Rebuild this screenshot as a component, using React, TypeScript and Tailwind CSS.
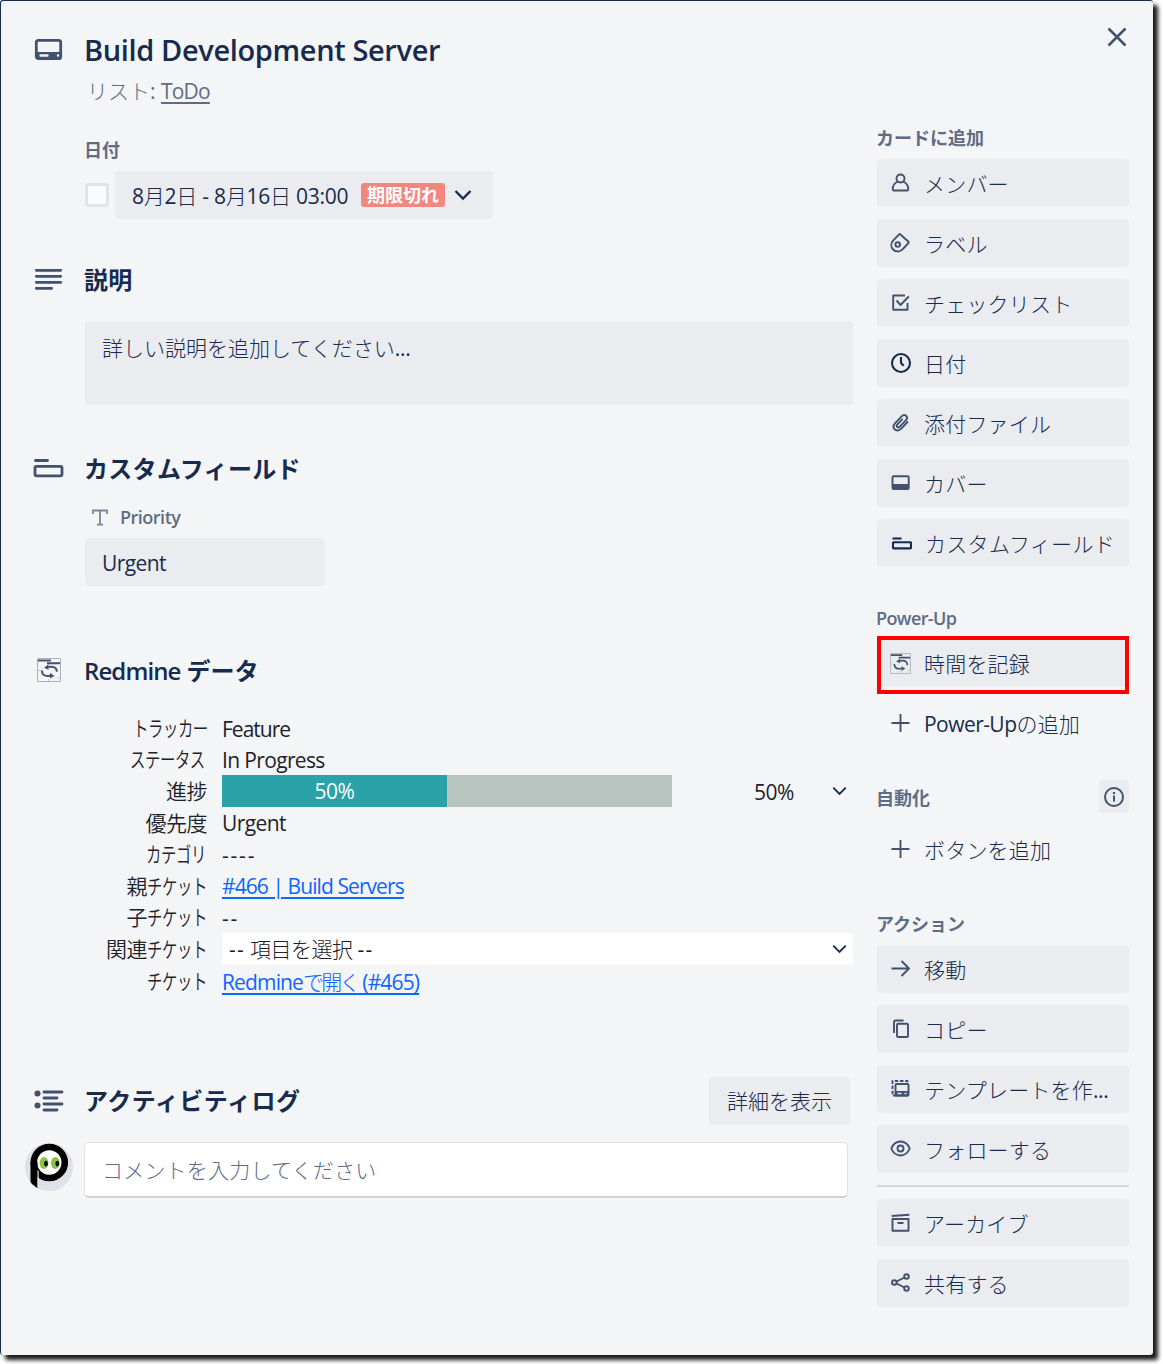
import type { ReactNode } from 'react'
import clsx from 'clsx'

/* ---------- icons ---------- */

// Large icons sit in the left gutter, small ones in the sidebar buttons.
function Big({ children }: { children: ReactNode }) {
  return (
    <svg width="36" height="36" viewBox="0 0 36 36" fill="none" stroke="#42526e" strokeWidth="2.8" strokeLinecap="round" className="shrink-0">
      {children}
    </svg>
  )
}

function Small({ dark, children }: { dark?: boolean; children: ReactNode }) {
  return (
    <svg
      width="24"
      height="24"
      viewBox="0 0 24 24"
      fill="none"
      strokeWidth="1.9"
      strokeLinejoin="round"
      className={clsx('shrink-0', dark ? 'stroke-[#172b4d]' : 'stroke-[#42526e]')}
    >
      {children}
    </svg>
  )
}

function Chevron({ size }: { size: 'sm' | 'lg' }) {
  return (
    <svg viewBox="0 0 18 12" fill="none" stroke="#172b4d" strokeWidth="2.3" className={size === 'lg' ? 'h-[12px] w-[18px]' : 'h-[10px] w-[15px]'}>
      <path d="M1.5 2 9 9.5 16.5 2" />
    </svg>
  )
}

function RedmineIcon({ size }: { size: 'sm' | 'lg' }) {
  return (
    <svg viewBox="0 0 24 24" fill="none" className={clsx('shrink-0', size === 'lg' ? 'size-[24px]' : 'size-[21px]')}>
      <path d="M.5.5h23v23H.5z" stroke="#a9b1b8" />
      <path d="M11.5 21v2M1 12.5h3M20 20h3" stroke="#c3c8ce" />
      <path d="M1 2.500h13M10 5.200h13" stroke="#42526e" strokeWidth="2" />
      <path d="M19.800 13.800c.2-3.300-2-5-5.300-5-1.200 0-2 .1-3 .3M5 12.500c-.2 3.300 1.500 5.300 5 5.500 1.200 0 2-.1 3-.3" stroke="#42526e" strokeWidth="2" />
      <path d="M11.500 6.300v5.500L7 9.800zM13 15v5.500l4.500-2.700z" fill="#42526e" />
    </svg>
  )
}

const CardIcon = (
  <Big>
    <rect x="6.300" y="8.300" width="24.400" height="18.400" rx="2" />
    <path d="M6 20h25v6H6z" fill="#42526e" stroke="none" />
    <path d="M10.500 23.500h7M28 23.500h.1" stroke="#f4f5f7" strokeWidth="2.400" />
  </Big>
)
const DescIcon = (
  <Big>
    <path d="M6.300 8.300h24.400M6.300 14.300h24.400M6.300 20.300h24.400M6.300 26.300h15.400" />
  </Big>
)
const FieldIcon = (
  <Big>
    <path d="M5.500 9.500h12" />
    <rect x="5" y="15.300" width="27" height="9.500" rx="1.500" />
  </Big>
)
const ListIcon = (
  <Big>
    <path d="M14 9h18M14 15h13M14 21h18M14 27h13" />
    <circle cx="7.500" cy="10.500" r="3" fill="#42526e" stroke="none" />
    <circle cx="7.500" cy="22.500" r="3" fill="#42526e" stroke="none" />
  </Big>
)

const icons = {
  member: (
    <Small>
      <circle cx="12.500" cy="7.500" r="4" />
      <path d="M9.800 10.500C6.500 12 4.700 15 4.700 18.300c0 .8.300 1.200 1 1.200h13.600c.7 0 1-.4 1-1.200 0-3.300-1.800-6.300-5.100-7.800" />
    </Small>
  ),
  label: (
    <Small>
      <path d="M12.200 3.200 20.500 10.800c.4.400.4.800 0 1.200l-6 6.300c-3 3-7.200 2.600-9.400.2-2.500-2.600-2.300-6.500.2-9.200l5.800-6c.4-.4.700-.4 1.100-.1z" />
      <circle cx="9.700" cy="13.600" r="2.300" />
    </Small>
  ),
  checklist: (
    <Small>
      <path d="M17 4.500H5.200v14.300h14.300V12" />
      <path d="m8.500 9.500 4 4.500 8.300-8.500" />
    </Small>
  ),
  clock: (
    <Small dark>
      <circle cx="13" cy="12" r="9" strokeWidth="2.1" />
      <path d="M13 6V12l2.700 2.800" strokeWidth="2.1" />
    </Small>
  ),
  clip: (
    <Small>
      <path d="m20 10.500-7 7.300c-2 2-4.700 2.200-6.300.6-1.700-1.700-1.400-4.300.5-6.300l6.400-6.700c1.500-1.500 3.400-1.600 4.600-.5 1.200 1.200 1 3-.4 4.500l-6 6.300c-.8.900-2 1-2.600.3-.7-.7-.6-1.700.2-2.600l5.200-5.500" />
    </Small>
  ),
  cover: (
    <Small>
      <rect x="4.500" y="5.200" width="16.200" height="12.800" rx="1" />
      <path d="M4.500 13h16v5h-16z" fill="#42526e" stroke="none" />
    </Small>
  ),
  field: (
    <Small dark>
      <path d="M4.500 7.500h9" strokeWidth="2.1" />
      <rect x="5" y="11.200" width="18" height="6.200" rx=".6" strokeWidth="2.1" />
    </Small>
  ),
  plus: (
    <Small>
      <path d="M12.500 3v18M3.500 12h18" />
    </Small>
  ),
  arrow: (
    <Small>
      <path d="M3.500 11.500h17M13.500 4l7.500 7.500-7.500 7.500" />
    </Small>
  ),
  copy: (
    <Small>
      <path d="M15.500 3.500h-8c-1 0-1.500.5-1.500 1.500v11" />
      <rect x="9" y="6.800" width="11" height="13.200" rx="1" />
    </Small>
  ),
  template: (
    <Small>
      <path d="M8.500 18.500h-4V4h15v3" strokeDasharray="3.500 1.700" />
      <rect x="7.500" y="7" width="13" height="11.700" rx="1" />
      <path d="M7.500 14h13v5h-13z" fill="#42526e" stroke="none" />
      <path d="M9.500 16.500h4M16.500 16.500h2" stroke="#ebecf0" strokeWidth="1.500" />
    </Small>
  ),
  eye: (
    <Small>
      <path d="M12.500 4.500c4.500 0 7.500 2.800 9.200 7-1.700 4.200-4.700 7-9.200 7s-7.500-2.800-9.200-7c1.700-4.200 4.700-7 9.200-7z" />
      <circle cx="12.500" cy="11.500" r="3" />
    </Small>
  ),
  archive: (
    <Small>
      <path d="m3.700 5 17.600-1.200" />
      <path d="M4.500 8h16v11.800h-16zM9.500 12h6" />
    </Small>
  ),
  share: (
    <Small>
      <circle cx="6.300" cy="11.500" r="2.300" />
      <circle cx="18.500" cy="5.500" r="2.300" />
      <circle cx="18.500" cy="17.500" r="2.300" />
      <path d="m8.500 10.500 8-4M8.500 12.500l8 4" />
    </Small>
  ),
  redmine: (
    <span className="flex size-[24px] items-center justify-center pl-px">
      <RedmineIcon size="sm" />
    </span>
  ),
}

/* ---------- sidebar ---------- */

function SideButton({ icon, plain, children }: { icon: keyof typeof icons; plain?: boolean; children: ReactNode }) {
  return (
    <button className={clsx('flex h-12 w-full shrink-0 items-center gap-3 rounded-[4px] pl-[11px] text-left', !plain && 'bg-[#eaecf0]')}>
      {icons[icon]}
      <span className="whitespace-nowrap pt-px leading-[30px] tracking-[0.2px]">{children}</span>
    </button>
  )
}

function SideLabel({ children }: { children: ReactNode }) {
  return <h3 className="-ml-px text-[18px] leading-[24px] font-bold text-[#5e6c84]">{children}</h3>
}

function Sidebar() {
  return (
    <aside className="w-[252px] pt-[125px]">
      <SideLabel>カードに追加</SideLabel>
      <div className="mt-[9px] flex flex-col gap-3">
        <SideButton icon="member">メンバー</SideButton>
        <SideButton icon="label">ラベル</SideButton>
        <SideButton icon="checklist">チェックリスト</SideButton>
        <SideButton icon="clock">日付</SideButton>
        <SideButton icon="clip">添付ファイル</SideButton>
        <SideButton icon="cover">カバー</SideButton>
        <SideButton icon="field">
          <span className="ml-px tracking-[0.3px]">カスタムフィールド</span>
        </SideButton>
      </div>

      <div className="mt-[39px] mb-[9px]">
        <SideLabel>
          <span className="font-semibold tracking-[-0.6px]">Power-Up</span>
        </SideLabel>
      </div>
      <div className="relative">
        <SideButton icon="redmine">時間を記録</SideButton>
        <div className="absolute -top-[3px] left-0 h-[58px] w-[252px] border-4 border-[#ff0000]" />
      </div>
      <div className="mt-3">
        <SideButton icon="plus" plain>
          <span className="font-normal tracking-[-0.55px]">Power-Up</span>の追加
        </SideButton>
      </div>

      <div className="mt-[33px] flex h-[33px] items-center justify-between">
        <div className="pt-[2px]">
          <SideLabel>自動化</SideLabel>
        </div>
        <span className="flex h-[33px] w-[30px] items-center justify-center rounded-[4px] bg-[#eaecf0]">
          <svg width="22" height="22" viewBox="0 0 22 22" fill="none" stroke="#42526e" strokeWidth="2">
            <circle cx="11" cy="11" r="9" />
            <path d="M11 9.500v6M11 6v2" />
          </svg>
        </span>
      </div>
      <div className="mt-3">
        <SideButton icon="plus" plain>
          ボタンを追加
        </SideButton>
      </div>

      <div className="mt-[39px]">
        <SideLabel>アクション</SideLabel>
      </div>
      <div className="mt-[9px] flex flex-col gap-3">
        <SideButton icon="arrow">移動</SideButton>
        <SideButton icon="copy">コピー</SideButton>
        <SideButton icon="template">
          テンプレートを作<span className="font-normal tracking-[-0.4px]">...</span>
        </SideButton>
        <SideButton icon="eye">フォローする</SideButton>
        <hr className="h-[2px] border-0 bg-[#d3d6db]" />
        <SideButton icon="archive">アーカイブ</SideButton>
        <SideButton icon="share">共有する</SideButton>
      </div>
    </aside>
  )
}

/* ---------- main column ---------- */

function Heading({ icon, children }: { icon: ReactNode; children: ReactNode }) {
  return (
    <div className="flex h-[36px] items-center">
      <div className="flex w-[83px] shrink-0 pl-[29px]">{icon}</div>
      <h2 className="whitespace-nowrap text-[24px] leading-[36px] font-bold tracking-[0.3px]">{children}</h2>
    </div>
  )
}

// Half-width looking katakana: squeezed into the given box.
function Kana({ w, children }: { w: string; children: ReactNode }) {
  return (
    <span className={clsx('inline-block text-left', w)}>
      <span className="inline-block origin-left scale-x-[0.73] whitespace-nowrap">{children}</span>
    </span>
  )
}

function Row({ label, h, children }: { label: ReactNode; h: string; children: ReactNode }) {
  return (
    <div className={clsx('flex items-center text-[#1d2129]', h)}>
      <div className="w-[122px] shrink-0 whitespace-nowrap text-right leading-[31px] font-[350]">{label}</div>
      <div className="ml-[15px] h-full min-w-0 flex-1 leading-[33px] font-normal">{children}</div>
    </div>
  )
}

const link = 'text-[#0c66ff] underline decoration-2 underline-offset-[3px]'

function RedmineTable() {
  return (
    <div className="mt-[24px] ml-[84px] tracking-[-0.5px]">
      <Row h="h-[31px]" label={<Kana w="w-[74px]">トラッカー</Kana>}>
        <span className="tracking-[-1px]">Feature</span>
      </Row>
      <Row h="h-[31px]" label={<Kana w="w-[77px]">ステータス</Kana>}>
        <span className="tracking-[-0.65px]">In Progress</span>
      </Row>
      <Row h="h-[32px]" label="進捗">
        <div className="flex h-[32px] items-center">
          <div className="h-full w-[450px] bg-[#b8c4bf]">
            <div className="h-full w-1/2 bg-[#2ba2a8] text-center text-white">50%</div>
          </div>
          <span className="ml-[82px] pt-[3px]">50%</span>
          <span className="mr-[6px] ml-auto">
            <Chevron size="sm" />
          </span>
        </div>
      </Row>
      <Row h="h-[32px]" label="優先度">
        <span className="tracking-[-0.6px]">Urgent</span>
      </Row>
      <Row h="h-[31px]" label={<Kana w="w-[61px]">カテゴリ</Kana>}>
        <span className="tracking-[1.8px]">----</span>
      </Row>
      <Row h="h-[32px]" label={<>親<Kana w="w-[60px]">チケット</Kana></>}>
        <a className={clsx(link, 'tracking-[-0.92px]')}>#466 | Build Servers</a>
      </Row>
      <Row h="h-[31px]" label={<>子<Kana w="w-[60px]">チケット</Kana></>}>
        <span className="tracking-[1.8px]">--</span>
      </Row>
      <Row h="h-[32px]" label={<>関連<Kana w="w-[60px]">チケット</Kana></>}>
        <div className="flex h-[32px] items-center justify-between bg-white pr-[6px] pl-[7px]">
          <span className="pt-px">
            <span className="tracking-[1.3px]">--</span> <span className="font-light">項目を選択</span> <span className="tracking-[1.3px]">--</span>
          </span>
          <Chevron size="sm" />
        </div>
      </Row>
      <Row h="h-[33px]" label={<Kana w="w-[60px]">チケット</Kana>}>
        <a className={clsx(link, 'inline-block pt-px tracking-[-0.85px]')}>
          Redmine<span className="font-light tracking-[-2.8px]">で開く</span> (#465)
        </a>
      </Row>
    </div>
  )
}

function Avatar() {
  return (
    <svg width="48" height="48" viewBox="0 0 48 48" className="mt-px shrink-0">
      <defs>
        <clipPath id="avatar">
          <circle cx="24" cy="24" r="24" />
        </clipPath>
      </defs>
      <g clipPath="url(#avatar)">
        <path d="M0 0h48v48H0z" fill="#dfe1e6" />
        <circle cx="24.300" cy="19.500" r="15.500" fill="#fff" stroke="#000" strokeWidth="6.600" />
        <path d="M5.500 19h7v30h-7z" fill="#000" />
        <path d="M12.500 27v17h1.200V28z" fill="#dfe1e6" />
        <ellipse cx="19" cy="20" rx="4.400" ry="6" fill="#8bc53f" />
        <ellipse cx="30.300" cy="20" rx="4.400" ry="6" fill="#8bc53f" />
        <ellipse cx="21" cy="20.500" rx="1.900" ry="2.700" fill="#000" />
        <ellipse cx="32.300" cy="20.500" rx="1.900" ry="2.700" fill="#000" />
      </g>
    </svg>
  )
}

function Main() {
  return (
    <main className="w-[852px] pt-[29px]">
      <div className="flex h-10 items-center">
        <div className="w-[83px] shrink-0 pl-[29px]">{CardIcon}</div>
        <h1 className="whitespace-nowrap text-[29px] leading-10 font-semibold tracking-[-0.37px]">Build Development Server</h1>
      </div>
      <p className="mt-[6px] ml-[86px] h-[30px] leading-[30px] text-[#5e6c84]">
        リスト<span className="font-normal">: </span>
        <a className="font-normal tracking-[-0.8px] underline decoration-2 underline-offset-[3px]">ToDo</a>
      </p>

      <div className="mt-[32px] ml-[84px]">
        <h3 className="-ml-px text-[18px] leading-[24px] font-bold text-[#5e6c84]">日付</h3>
        <div className="mt-[9px] flex items-center">
          <span className="size-[24px] rounded-[3px] border-[3px] border-[#e1e3e6] bg-[#fafbfc]" />
          <div className="ml-[6px] flex h-12 w-[378px] items-center rounded-[4px] bg-[#eaecf0] pl-[17px]">
            <span className="w-[229px] whitespace-nowrap pt-[2px] leading-[30px] font-normal tracking-[-0.25px]">
              8<span className="font-light">月</span>2<span className="font-light">日</span> - 8<span className="font-light">月</span>16
              <span className="font-light">日</span> 03:00
            </span>
            <span className="h-[24px] w-[84px] rounded-[3px] bg-[#f4867e] text-center text-[18px] leading-[24px] font-bold text-white">期限切れ</span>
            <span className="ml-[9px]">
              <Chevron size="lg" />
            </span>
          </div>
        </div>
      </div>

      <div className="mt-[43px]">
        <Heading icon={DescIcon}>説明</Heading>
      </div>
      <div className="mt-[23px] ml-[84px] h-[84px] w-[768px] rounded-[4px] bg-[#eaecf0] px-[17px] pt-[12px] leading-[30px]">
        詳しい説明を追加してください<span className="font-normal tracking-[-0.3px]">...</span>
      </div>

      <div className="mt-[46px]">
        <Heading icon={FieldIcon}>カスタムフィールド</Heading>
      </div>
      <div className="mt-[18px] ml-[84px]">
        <div className="flex h-[24px] items-center pl-[7px] text-[18px] font-semibold tracking-[-0.5px] text-[#5e6c84]">
          <svg width="16" height="17" viewBox="0 0 16 17" fill="none" stroke="#7a869a" strokeWidth="1.800">
            <path d="M1 5V1.500h14V5M8 1.500v14M5 15.600h6" />
          </svg>
          <span className="ml-[12px]">Priority</span>
        </div>
        <div className="mt-[9px] flex h-12 w-[240px] items-center rounded-[4px] bg-[#eaecf0] pt-[4px] pl-[17px] font-normal tracking-[-0.6px]">
          Urgent
        </div>
      </div>

      <div className="mt-[67px]">
        <Heading
          icon={
            <span className="pb-[2px] pl-[7px]">
              <RedmineIcon size="lg" />
            </span>
          }
        >
          <span className="font-semibold tracking-[-0.9px]">Redmine</span>
          <span className="tracking-[-0.1px]"> データ</span>
        </Heading>
      </div>
      <RedmineTable />

      <div className="mt-[79px] flex h-12 items-center justify-between pr-[3px]">
        <Heading icon={ListIcon}>
          <span className="tracking-[0.5px]">アクティビティログ</span>
        </Heading>
        <button className="h-12 w-[141px] rounded-[4px] bg-[#eaecf0] pt-px">詳細を表示</button>
      </div>
      <div className="mt-[17px] flex pl-[24px]">
        <Avatar />
        <div className="ml-[11px] flex h-[56px] w-[764px] items-center rounded-[5px] border border-[#dfe1e6] border-b-2 border-b-[#cdd1d8] bg-white pt-[2px] pl-[17px] tracking-[0.2px] text-[#5e6c84]">
          コメントを入力してください
        </div>
      </div>
    </main>
  )
}

export default function App() {
  return (
    <div className="h-[1364px] w-[1163px] overflow-hidden bg-white">
      <div className="relative flex h-[1355px] w-[1153px] gap-6 rounded-[3px] border-t border-l border-[#172b4d] bg-[#f4f5f7] font-['Open_Sans','Noto_Sans_CJK_JP',sans-serif] text-[21px] font-light text-[#172b4d] shadow-[5px_5px_4px_0px_rgba(0,0,0,0.9)]">
        <Main />
        <Sidebar />
        <svg width="20" height="20" viewBox="0 0 20 20" stroke="#42526e" strokeWidth="2.500" className="absolute top-[26px] right-[26px]">
          <path d="m1.500 1.500 17 17M18.500 1.500l-17 17" />
        </svg>
      </div>
    </div>
  )
}
